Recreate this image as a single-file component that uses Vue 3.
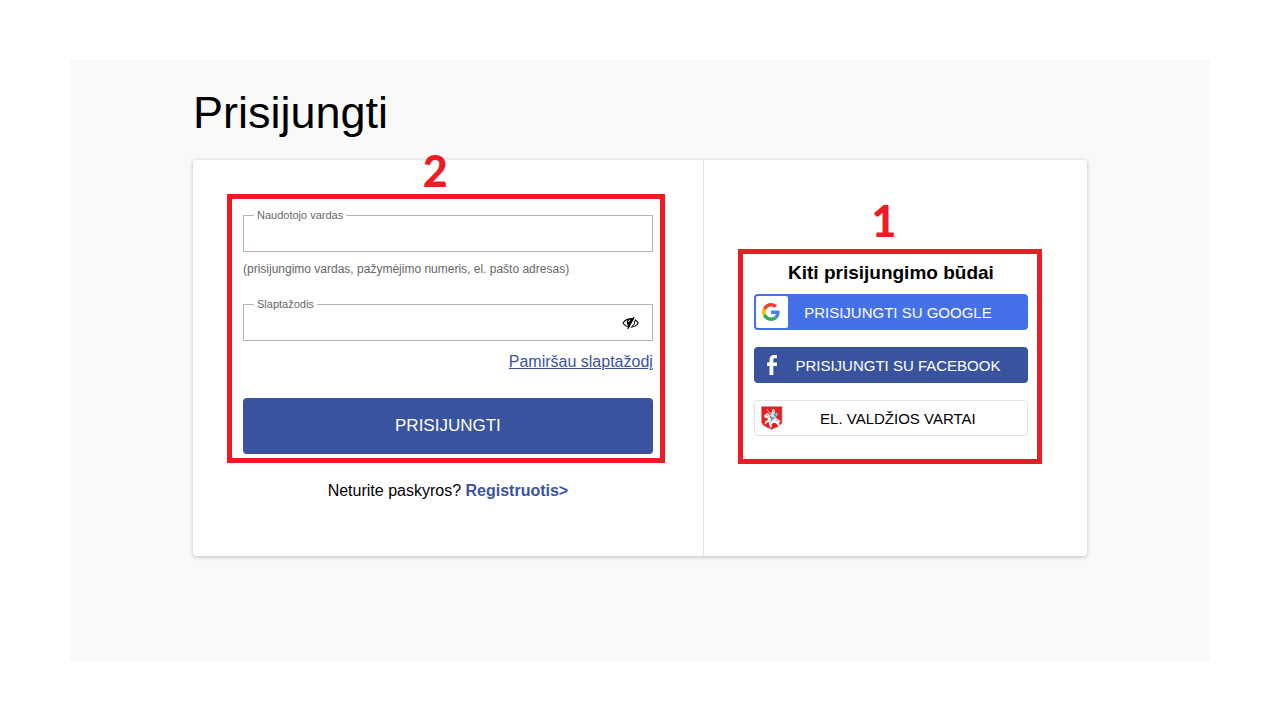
<template>
  <div class="page">
    <main class="panel">
      <h1 class="title">Prisijungti</h1>
      <div class="card">
        <section class="login">
          <form class="marked" @submit.prevent>
            <div class="frame frame-login">
              <span class="number">2</span>
            </div>
            <fieldset class="field">
              <legend><label for="username">Naudotojo vardas</label></legend>
              <div class="field-row">
                <input id="username" v-model="username" type="text" aria-describedby="username-hint" />
              </div>
            </fieldset>
            <p id="username-hint" class="hint">(prisijungimo vardas, pažymėjimo numeris, el. pašto adresas)</p>
            <fieldset class="field">
              <legend><label for="password">Slaptažodis</label></legend>
              <div class="field-row">
                <input id="password" v-model="password" :type="showPassword ? 'text' : 'password'" />
                <button class="eye" type="button" aria-label="Rodyti slaptažodį" @click="togglePassword">
                  <svg width="18" height="14" viewBox="0 0 18 14" fill="none">
                    <path d="M1 7C4.500 1.500 12.800 1.500 16.200 7C12.800 12.500 4.500 12.500 1 7Z" stroke="#000" stroke-width="1.100" />
                    <path d="M11.500 2.500C8 1.500 4.800 3.500 4.800 6.500C4.800 8.500 5.800 9.800 6.800 10.700Z" fill="#000" />
                    <path d="M12.500 4.500C13.200 7 11.800 9.500 9.500 10.400" stroke="#000" stroke-width="1.100" />
                    <path d="M12.200 1.200L5.800 12.800" stroke="#000" stroke-width="1.400" />
                    <path d="M13.500 1.500L7.100 13.200" stroke="#fff" stroke-width="1.100" />
                    <path d="M6.400 6C6.600 4.900 7.200 4.300 8.200 4" stroke="#fff" stroke-width="1" />
                  </svg>
                </button>
              </div>
            </fieldset>
            <a class="forgot" href="#">Pamiršau slaptažodį</a>
            <button class="submit" type="submit">PRISIJUNGTI</button>
          </form>
          <p class="register">Neturite paskyros? <a href="#">Registruotis&gt;</a></p>
        </section>

        <section class="other">
          <div class="marked">
            <div class="frame frame-other">
              <span class="number">1</span>
            </div>
            <h2 class="subtitle">Kiti prisijungimo būdai</h2>
            <div class="providers">
              <button class="provider google" type="button">
                <span class="icon">
                  <svg width="18" height="18" viewBox="0 0 48 48">
                    <path fill="#EA4335" d="M24 9.500c3.540 0 6.710 1.220 9.210 3.600l6.850-6.850C35.900 2.380 30.470 0 24 0 14.620 0 6.510 5.380 2.560 13.220l7.980 6.190C12.430 13.720 17.740 9.500 24 9.500z" />
                    <path fill="#4285F4" d="M46.980 24.550c0-1.570-.15-3.090-.38-4.550H24v9.020h12.940c-.58 2.960-2.260 5.480-4.780 7.180l7.730 6c4.510-4.180 7.090-10.360 7.090-17.650z" />
                    <path fill="#FBBC05" d="M10.530 28.590c-.48-1.450-.76-2.990-.76-4.590s.27-3.140.76-4.590l-7.980-6.190C.92 16.460 0 20.120 0 24c0 3.880.92 7.540 2.560 10.780l7.970-6.190z" />
                    <path fill="#34A853" d="M24 48c6.480 0 11.930-2.130 15.890-5.810l-7.730-6c-2.150 1.450-4.920 2.300-8.160 2.300-6.260 0-11.570-4.220-13.470-9.910l-7.980 6.190C6.510 42.620 14.620 48 24 48z" />
                  </svg>
                </span>
                <span class="text">PRISIJUNGTI SU GOOGLE</span>
              </button>
              <button class="provider facebook" type="button">
                <span class="icon">
                  <svg width="12" height="20" viewBox="0 0 12 20">
                    <path fill="#fff" d="M3.500 20V11H1V7.500h2.500V4.700C3.500 1.700 5.200 0 8 0h3v3.300H9C7.800 3.300 7.300 3.900 7.300 5v2.500H11V11H7.300v9z" />
                  </svg>
                </span>
                <span class="text">PRISIJUNGTI SU FACEBOOK</span>
              </button>
              <button class="provider gateway" type="button">
                <span class="icon">
                  <svg width="22" height="24" viewBox="0 0 44 48">
                    <path d="M1 1h41v30c0 8-10 11-20.500 16C11 42 1 39 1 31z" fill="#ed1c24" stroke="#c08a84" stroke-width="1" />
                    <!-- horse -->
                    <path d="M6 20l3-4 4-2 4 3 1 6 5 2 7-1 5 3 2 5-1 3 3 5-2 2-5-5-3-3-5 0-3 3 1 5-3 2-3-7 1-4-5 0-3 4-2-1 2-6 5-2-2-5-4 1z" fill="#eef4f7" />
                    <path d="M34 28c5-1 5 2 4 5l-2-2z" fill="#eef4f7" />
                    <!-- rider with raised sword -->
                    <path d="M22 8l3-2 3 2v4l3 3 1 6-4 3-7-1-3-4 2-5 2-2z" fill="#c3dbe6" />
                    <path d="M20 15l-5-3-3-6" fill="none" stroke="#e3eef3" stroke-width="1.500" />
                    <path d="M22 23l-1 7-3 2" fill="none" stroke="#8fb4c6" stroke-width="2" />
                    <path d="M27 13h7v6l-3 4-4-4z" fill="#2a91b4" />
                    <path d="M19 22l7 1-1 4-5 2z" fill="#4aa3c2" />
                    <path d="M31 14v6M29 17h4M15 21l3 4" stroke="#ffd044" stroke-width="1.300" />
                    <path d="M11 16l3 4M24 9l3 1M30 27l4 3" stroke="#577989" stroke-width="1.300" />
                  </svg>
                </span>
                <span class="text">EL. VALDŽIOS VARTAI</span>
              </button>
            </div>
          </div>
        </section>
      </div>
    </main>
  </div>
</template>

<script setup>
import { ref } from 'vue'

const username = ref('')
const password = ref('')
const showPassword = ref(false)

const togglePassword = () => {
  showPassword.value = !showPassword.value
}
</script>

<style>
body {
  background: #fff;
}
</style>

<style scoped>
.page {
  box-sizing: border-box;
  min-height: 100vh;
  padding: 60px 70px 59px;
  display: flex;
  font-family: "Liberation Sans", Arial, sans-serif;
  font-size: 16px;
  color: #000;
}

.panel {
  flex: 1;
  padding: 28px 123px 60px;
  background: #f9f9f9;
}

.title {
  margin: 0 0 22px;
  font-size: 45px;
  line-height: 50px;
  font-weight: 400;
}

.card {
  display: grid;
  grid-template-columns: 4fr 3fr;
  background: #fff;
  border-radius: 4px;
  box-shadow: 0 1px 4px rgba(0, 0, 0, .25);
}

.login {
  padding: 49px 50px 55px;
  border-right: 1px solid #e3e3e3;
}

.other {
  padding: 102px 59px 55px 50px;
}

.marked {
  position: relative;
  display: flex;
  flex-direction: column;
}

/* red marker frames drawn over the form */
.frame {
  position: absolute;
  border: 5px solid #ed1c24;
  pointer-events: none;
}

.frame-login {
  inset: -15px -12px -9px -16px;
}

.frame-other {
  inset: -13px -14px -28px -16px;
}

.number {
  position: absolute;
  bottom: 100%;
  left: 0;
  width: 95%;
  padding-bottom: 1px;
  text-align: center;
  font-family: Lato, "Open Sans", sans-serif;
  font-size: 43px;
  line-height: 54px;
  font-weight: 900;
  color: #ed1c24;
}

.frame-other .number {
  width: 96%;
  padding-bottom: 6px;
}

.field {
  margin: 0;
  padding: 0 10px;
  min-width: 0;
  border: 1px solid #b5b5b5;
}

.field legend {
  padding: 0 3px;
  font-size: 11px;
  line-height: 13px;
  color: #666;
}

.field-row {
  display: flex;
  height: 29px;
}

.field input {
  flex: 1;
  min-width: 0;
  padding: 0 4px;
  border: 0;
  outline: none;
  background: transparent;
  font: inherit;
}

.eye {
  display: flex;
  align-items: center;
  height: 24px;
  padding: 0 2px;
  border: 0;
  background: none;
  cursor: pointer;
}

.hint {
  margin: 8px 0 20px;
  font-size: 12px;
  line-height: 18px;
  color: #666;
}

.forgot {
  align-self: flex-end;
  margin: 11px 0 26px;
  line-height: 20px;
  color: #3a539f;
}

.submit {
  height: 56px;
  border: 0;
  border-radius: 4px;
  background: #3a539f;
  color: #fff;
  font-family: inherit;
  font-size: 17px;
  cursor: pointer;
}

.register {
  margin: 27px 0 0;
  text-align: center;
  line-height: 20px;
}

.register a {
  color: #3a539f;
  font-weight: 700;
  text-decoration: none;
}

.subtitle {
  margin: 0 0 10px;
  font-size: 19px;
  line-height: 22px;
  text-align: center;
}

.providers {
  display: flex;
  flex-direction: column;
  gap: 17px;
}

.provider {
  display: flex;
  align-items: center;
  height: 36px;
  padding: 0 18px 0 0;
  border: 2px solid transparent;
  border-radius: 4px;
  font-family: inherit;
  font-size: 15px;
  cursor: pointer;
}

.provider .icon {
  box-sizing: border-box;
  display: flex;
  align-items: center;
  justify-content: center;
  width: 32px;
  height: 32px;
}

.provider .text {
  flex: 1;
  text-align: center;
}

.google {
  background: #4470e8;
  border-color: #4470e8;
  color: #fff;
}

.google .icon {
  padding-right: 2px;
  border-radius: 2px;
  background: #fff;
}

.facebook {
  background: #3a539f;
  border-color: #3a539f;
  color: #fff;
}

.gateway {
  border: 1px solid #e3e3e3;
  padding: 0 19px 0 1px;
  background: #fff;
  color: #000;
}
</style>
